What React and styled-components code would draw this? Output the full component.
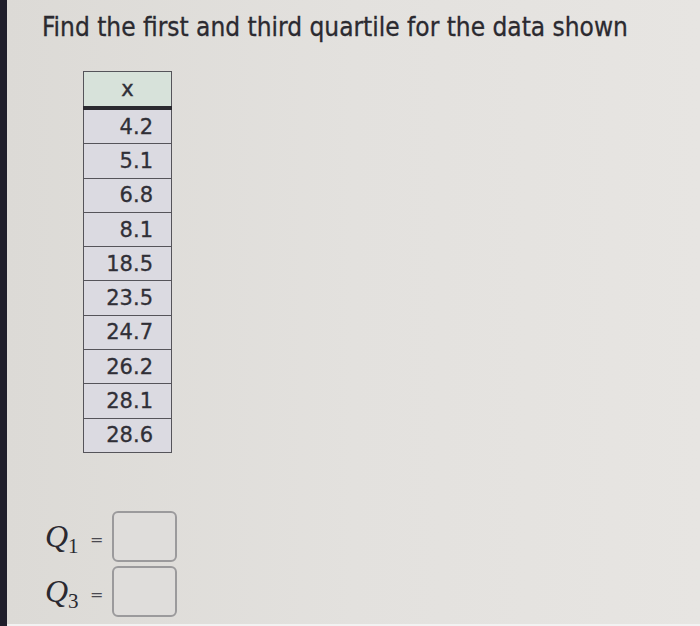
import styled, { createGlobalStyle } from 'styled-components'

const rows = ['4.2', '5.1', '6.8', '8.1', '18.5', '23.5', '24.7', '26.2', '28.1', '28.6']

const GlobalStyle = createGlobalStyle`
  html, body {
    margin: 0;
    padding: 0;
    background: #e1dfdc;
  }
`

const Screen = styled.div`
  display: flex;
  width: 700px;
  height: 626px;
  overflow: hidden;
`

const Bezel = styled.div`
  width: 7px;
  flex-shrink: 0;
  background: #1f1e2b;
`

const Page = styled.div`
  flex: 1;
  display: flex;
  flex-direction: column;
  background: linear-gradient(90deg, #dcdad6 0%, #e3e1de 50%, #e7e5e2 100%);
  border-bottom: 2px solid #f2f2f2;
  padding: 9px 0 0 35px;
`

const Title = styled.h1`
  margin: 0;
  font-family: "DejaVu Sans Condensed", "DejaVu Sans", sans-serif;
  font-stretch: condensed;
  font-weight: normal;
  font-size: 26px;
  line-height: 36px;
  color: #2b2a30;
  -webkit-text-stroke: 0.3px #2b2a30;
`

const Table = styled.table`
  margin: 26px 0 0 41px;
  border-collapse: collapse;
  width: 89px;
  font-family: "DejaVu Sans", sans-serif;
  color: #302f37;
`

const HeadCell = styled.th`
  height: 34px;
  padding: 0;
  background: #d7e2da;
  border: 1.5px solid #55545a;
  border-bottom: 4px solid #2b2a30;
  font-weight: normal;
  font-size: 21px;
  text-align: center;
  -webkit-text-stroke: 0.4px #302f37;
`

const Cell = styled.td`
  height: 33.3px;
  padding: 0 18px 0 0;
  background: #dbdae1;
  border: 1.5px solid #55545a;
  font-size: 21px;
  text-align: right;
  -webkit-text-stroke: 0.3px #302f37;
`

const Answers = styled.div`
  display: grid;
  grid-template-columns: 43px 24px 65px;
  row-gap: 4px;
  margin: 58px 0 0 3px;
  align-items: center;
`

const Label = styled.span`
  font-family: "Liberation Serif", serif;
  font-style: italic;
  font-size: 32px;
  line-height: 40px;
  color: #2a2930;
  white-space: nowrap;
`

const Sub = styled.sub`
  font-style: normal;
  font-size: 21px;
  vertical-align: -6px;
  line-height: 0;
`

const Equals = styled.span`
  font-family: "DejaVu Sans", sans-serif;
  font-size: 16px;
  color: #4a4950;
  padding: 6px 0 0 2px;
`

const Box = styled.div`
  width: 61px;
  height: 47px;
  border: 2px solid #9b9a9c;
  border-radius: 6px;
  background: #dfdddb;
`

const Answer = ({ n }) => (
  <>
    <Label>Q<Sub>{n}</Sub></Label>
    <Equals>=</Equals>
    <Box />
  </>
)

export default function App() {
  return (
    <>
      <GlobalStyle />
      <Screen>
        <Bezel />
        <Page>
          <Title>Find the first and third quartile for the data shown</Title>
          <Table>
            <thead>
              <tr><HeadCell>x</HeadCell></tr>
            </thead>
            <tbody>
              {rows.map(v => (
                <tr key={v}><Cell>{v}</Cell></tr>
              ))}
            </tbody>
          </Table>
          <Answers>
            <Answer n="1" />
            <Answer n="3" />
          </Answers>
        </Page>
      </Screen>
    </>
  )
}
